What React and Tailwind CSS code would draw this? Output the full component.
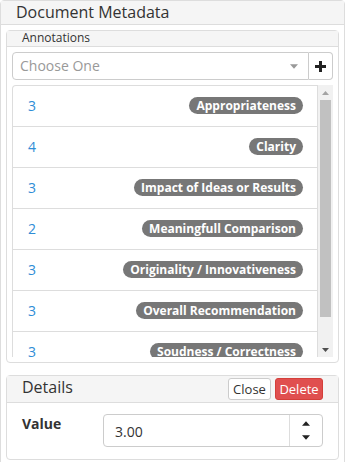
const ANNOTATIONS = [
  { value: 3, label: 'Appropriateness' },
  { value: 4, label: 'Clarity' },
  { value: 3, label: 'Impact of Ideas or Results' },
  { value: 2, label: 'Meaningfull Comparison' },
  { value: 3, label: 'Originality / Innovativeness' },
  { value: 3, label: 'Overall Recommendation' },
  { value: 3, label: 'Soudness / Correctness' },
];

function Triangle({ up, className }) {
  return (
    <svg width="9" height="5" viewBox="0 0 9 5" className={className}>
      {up ? <path d="M0 5 L4.5 0 L9 5 Z" fill="currentColor" /> : <path d="M0 0 L9 0 L4.5 5 Z" fill="currentColor" />}
    </svg>
  );
}

function FakeScrollbar() {
  return (
    <div className="w-[15px] h-full bg-[#f1f1f1] flex flex-col items-center">
      <div className="h-[15px] flex items-center justify-center text-[#a3a3a3]">
        <svg width="7" height="4" viewBox="0 0 7 4"><path d="M0 4 L3.5 0 L7 4 Z" fill="currentColor" /></svg>
      </div>
      <div className="w-[11px] h-[217px] bg-[#c1c1c1]" />
      <div className="flex-1" />
      <div className="h-[15px] flex items-center justify-center text-[#505050]">
        <svg width="7" height="4" viewBox="0 0 7 4"><path d="M0 0 L7 0 L3.5 4 Z" fill="currentColor" /></svg>
      </div>
    </div>
  );
}

export default function App() {
  return (
    <div className="w-[346px] h-[462px] overflow-hidden bg-white text-[#333] font-['Open_Sans',sans-serif]">
      <div className="w-[345px] h-[470px] border border-[#ddd] rounded-[4px]">
        <div className="h-[24px] bg-[#f5f5f5] border-b border-[#ddd] pl-[15px] flex items-center text-[16px] leading-none">
          <span className="-mt-[2px]">Document Metadata</span>
        </div>

        <div className="p-[5px]">
          {/* Annotations */}
          <div className="border border-[#ddd] rounded-[4px]">
            <div className="h-[16px] bg-[#f5f5f5] border-b border-[#ddd] pl-[15px] flex items-center text-[12px] leading-none">
              <span className="-mt-[1px]">Annotations</span>
            </div>
            <div className="p-[5px]">
              <div className="flex h-[28px]">
                <div className="flex-1 border border-[#ccc] rounded-l-[4px] flex items-center pl-[7px] pr-[10px] text-[14px] text-[#999]">
                  <span className="flex-1 -mt-[2px]">Choose One</span>
                  <Triangle className="text-[#999] w-[8px]" />
                </div>
                <button className="w-[24px] border border-l-0 border-[#ccc] rounded-r-[4px] flex items-center justify-center">
                  <svg width="11" height="11" viewBox="0 0 11 11">
                    <rect x="4" y="0" width="3" height="11" fill="#222" />
                    <rect x="0" y="4" width="11" height="3" fill="#222" />
                  </svg>
                </button>
              </div>

              <div className="mt-[5px] h-[272px] flex">
                <div className="flex-1 overflow-hidden border-l border-t border-r border-[#ddd] rounded-tl-[4px]">
                  {ANNOTATIONS.map((a) => (
                    <div key={a.label} className="h-[41px] shrink-0 border-b border-[#ddd] flex items-center justify-between pl-[15px] pr-[14px] pb-[2px]">
                      <span className="text-[14px] text-[#2f8dd6]">{a.value}</span>
                      <span className="h-[17px] px-[7px] rounded-full bg-[#777] text-white text-[12px] font-bold leading-[17px]">
                        {a.label}
                      </span>
                    </div>
                  ))}
                </div>
                <FakeScrollbar />
              </div>
            </div>
          </div>

          {/* Details */}
          <div className="mt-[12px] border border-[#ddd] rounded-[4px]">
            <div className="h-[27px] bg-[#f5f5f5] border-b border-[#ddd] pl-[15px] pr-[15px] flex items-center justify-between">
              <span className="text-[16px] leading-none -mt-[4px]">Details</span>
              <div className="flex gap-[4px]">
                <button className="h-[22px] w-[43px] bg-white border border-[#ccc] rounded-[3px] text-[13px] text-[#333] leading-none">
                  Close
                </button>
                <button className="h-[22px] w-[48px] bg-[#e04f4f] border border-[#d43f3a] rounded-[3px] text-[13px] text-white leading-none">
                  Delete
                </button>
              </div>
            </div>
            <div className="pl-[15px] pr-[15px] pt-[11px] pb-[12px] flex items-start">
              <label className="w-[81px] -mt-[1px] text-[14px] font-bold">Value</label>
              <div className="flex-1 h-[33px] flex border border-[#ccc] rounded-[4px]">
                <div className="flex-1 flex items-center pl-[11px] pt-[2px] text-[14px] text-[#333]">3.00</div>
                <div className="w-[33px] border-l border-[#ddd] flex flex-col items-center justify-center gap-[9px] text-[#222]">
                  <Triangle up className="w-[8px]" />
                  <Triangle className="w-[8px]" />
                </div>
              </div>
            </div>
          </div>
        </div>
      </div>
    </div>
  );
}
